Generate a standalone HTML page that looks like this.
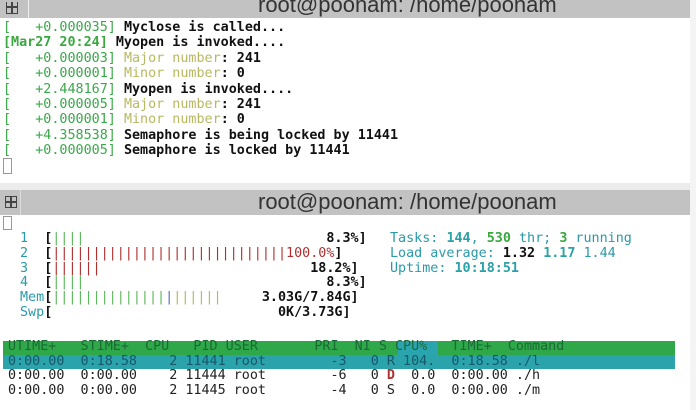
<!DOCTYPE html>
<html><head><meta charset="utf-8"><style>
*{margin:0;padding:0;box-sizing:border-box}
body{width:696px;height:410px;background:#fff;position:relative;overflow:hidden;font-family:"DejaVu Sans Mono","Liberation Mono",monospace;font-size:13.4px}
.bar{position:absolute;left:0;width:690px;background:#c2c2c2;}
.ttl{position:absolute;font-family:"Liberation Sans",sans-serif;font-size:22px;color:#333;white-space:nowrap}
.ln{position:absolute;white-space:pre;line-height:15px}
.g{color:#3aa84a}.y{color:#b8b860}.b{font-weight:bold;color:#111}
.c{color:#2a9aa8}.cb{color:#2aa0a8;font-weight:bold}.gb{color:#3aa840;font-weight:bold}
.r{color:#b03030}.gr{color:#5cb85c}
.icon{position:absolute;width:12px;height:12px;border:1.5px solid #444}
.icon:before{content:"";position:absolute;left:4px;top:0;width:1.5px;height:100%;background:#444}
.icon:after{content:"";position:absolute;left:0;top:4px;width:100%;height:1.5px;background:#444}
</style></head><body>
<div class="bar" style="top:0;height:18px"></div>
<div class="icon" style="left:6px;top:2px;border-top:none"></div>
<div style="position:absolute;left:28px;top:0;width:1px;height:18px;background:#eee"></div>
<div class="ttl" style="left:258px;top:-8px">root@poonam: /home/poonam</div>
<div style="position:absolute;left:690px;top:0;width:6px;height:410px;background:#f4f4f4"></div>

<div class="ln" style="left:3px;top:20px;line-height:15.4px"><span class="g">[   +0.000035]</span> <span class="b">Myclose is called...</span>
<span class="gb">[Mar27 20:24]</span> <span class="b">Myopen is invoked....</span>
<span class="g">[   +0.000003]</span> <span class="y">Major number</span><span class="b">: 241</span>
<span class="g">[   +0.000001]</span> <span class="y">Minor number</span><span class="b">: 0</span>
<span class="g">[   +2.448167]</span> <span class="b">Myopen is invoked....</span>
<span class="g">[   +0.000005]</span> <span class="y">Major number</span><span class="b">: 241</span>
<span class="g">[   +0.000001]</span> <span class="y">Minor number</span><span class="b">: 0</span>
<span class="g">[   +4.358538]</span> <span class="b">Semaphore is being locked by 11441</span>
<span class="g">[   +0.000005]</span> <span class="b">Semaphore is locked by 11441</span></div>
<div style="position:absolute;left:3px;top:158px;width:9px;height:16px;border:1px solid #999"></div>

<div style="position:absolute;left:0;top:183px;width:690px;height:7px;background:#ececec"></div>
<div class="bar" style="top:190px;height:25px"></div>
<div class="icon" style="left:5px;top:196px"></div>
<div style="position:absolute;left:20px;top:190px;width:1px;height:25px;background:#ddd"></div>
<div class="ttl" style="left:258px;top:189px">root@poonam: /home/poonam</div>
<div style="position:absolute;left:3px;top:216px;width:9px;height:14px;border:1px solid #999"></div>

<div class="ln" style="left:20px;top:232px;line-height:14.8px"><span class="c">1  </span><span class="b">[</span><span class="gr">||||</span>                             <span class="b"> 8.3%]</span>
<span class="c">2  </span><span class="b">[</span><span class="r">|||||||||||||||||||||||||||||100.0%</span><span class="b">]</span>
<span class="c">3  </span><span class="b">[</span><span class="r">||||||</span>                          <span class="b">18.2%]</span>
<span class="c">4  </span><span class="b">[</span><span class="gr">||||</span>                             <span class="b"> 8.3%]</span>
<span class="c">Mem</span><span class="b">[</span><span class="gr">||||||||||||||</span><span style="color:#5a6ab8">|</span><span class="y">||||||</span>     <span class="b">3.03G/7.84G]</span>
<span class="c">Swp</span><span class="b">[</span>                            <span class="b">0K/3.73G]</span></div>

<div class="ln" style="left:390px;top:232px;line-height:14.8px"><span class="c">Tasks: </span><span class="cb">144</span><span class="c">, </span><span class="gb">530</span><span class="c"> thr; </span><span class="gb">3</span><span class="c"> running</span>
<span class="c">Load average: </span><span class="b">1.32 </span><span class="cb">1.17 </span><span class="c">1.44</span>
<span class="c">Uptime: </span><span class="cb">10:18:51</span></div>

<div style="position:absolute;left:3px;top:341px;width:672px;height:14px;background:#2ea848"></div>
<div style="position:absolute;left:398px;top:341px;width:40px;height:14px;background:#2aa5b0"></div>
<div style="position:absolute;left:3px;top:355px;width:672px;height:14px;background:#2aa3aa"></div>
<div class="ln" style="left:8px;top:340px;line-height:14.6px"><span style="color:#1a6a35">UTIME+   STIME+  CPU   PID USER       PRI  NI S CPU%   TIME+  Command</span>
<span style="color:#17586a">0:00.00  0:18.58    2 11441 root        -3   0 R 104.  0:18.58 ./l</span>
<span style="color:#222">0:00.00  0:00.00    2 11444 root        -6   0 <b class="r">D</b>  0.0  0:00.00 ./h</span>
<span style="color:#222">0:00.00  0:00.00    2 11445 root        -4   0 S  0.0  0:00.00 ./m</span></div>
</body></html>
